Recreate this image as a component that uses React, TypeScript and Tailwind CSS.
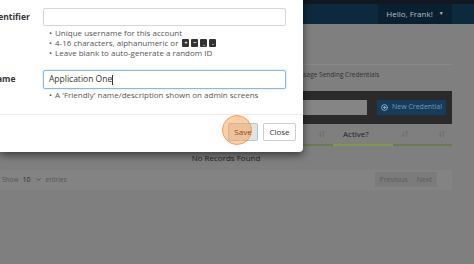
import { ArrowDownUp, ChevronDown, PlusCircle } from "lucide-react";

const font = { fontFamily: "'Open Sans', 'Liberation Sans', sans-serif" };

const keys = ["+", "−", "_", "."];

function SortIcon() {
  return <ArrowDownUp size={8} strokeWidth={2} className="text-[#6a6a6a]" />;
}

export default function App() {
  return (
    <div
      className="relative w-[474px] h-[264px] overflow-hidden bg-[#7f7f7f] text-[#2a2a2a]"
      style={font}
    >
      {/* Navbar */}
      <div className="h-[4px] bg-[#111821]" />
      <div className="h-[20px] bg-[#0d293d] flex justify-end pr-[22px]">
        <div className="w-[74px] bg-[#0a2031] flex items-center justify-center gap-[6px] text-[8px] text-[#b4bfc9]">
          <span>Hello, Frank!</span>
          <span className="text-[5px]">▼</span>
        </div>
      </div>

      {/* Page content (under overlay) */}
      <div className="pr-[22px]">
        <div className="mt-[40px] border-t border-[#898989]" />
        <div className="pl-[286px] pt-[5px] text-[6.5px] text-[#333]">
          » Message Sending Credentials
        </div>

        <div className="mt-[11px] h-[33px] bg-[#2a2a2a] flex items-center pl-[4px] pr-[6px]">
          <div className="flex-1 h-[15px] bg-[#858585]" />
          <div className="ml-[10px] w-[69px] h-[15px] bg-[#163c5c] flex items-center justify-center gap-[4px] text-[7px] text-[#7b97b1]">
            <PlusCircle size={7} strokeWidth={3} className="text-[#9fb3c6]" />
            <span>New Credential</span>
          </div>
        </div>

        <div className="h-[22px] flex items-center border-b-2 border-[#6b7a52] text-[8px] relative">
          <div className="w-[326px] flex justify-end">
            <SortIcon />
          </div>
          <div className="ml-[17px] w-[66px] flex items-center justify-between">
            <span className="text-[#222]">Active?</span>
            <SortIcon />
          </div>
          <div className="flex-1 flex justify-end pr-[6px]">
            <SortIcon />
          </div>
          <div className="absolute left-[333px] w-[60px] -bottom-[2px] h-[2px] bg-[#7d9a49]" />
        </div>

        <div className="h-[24px] flex items-center justify-center text-[8px] text-[#252525]">
          No Records Found
        </div>

        <div className="h-[20px] bg-[#838383] flex items-center justify-between pl-[2px] pr-[15px] text-[6.5px] text-[#575757]">
          <div className="flex items-center gap-[4px]">
            <span>Show</span>
            <span className="text-[7px] text-[#2e2e2e]">10</span>
            <ChevronDown size={7} strokeWidth={3} className="text-[#4a4a4a]" />
            <span>entries</span>
          </div>
          <div className="h-[15px] bg-[#7b7b7b] flex items-center gap-[9px] px-[5px] text-[7px] text-[#5a5a5a]">
            <span>Previous</span>
            <span>Next</span>
          </div>
        </div>
      </div>

      {/* Modal */}
      <div className="absolute left-0 -top-[20px] w-[303px] h-[172px] bg-white rounded-br-[4px] shadow-[0_3px_8px_rgba(0,0,0,0.55)]">
        <div className="pt-[28px] pl-[43px] pr-[17px] relative">
          <div className="absolute -left-[10px] top-[31px] text-[8.5px] font-bold text-[#333]">Identifier</div>
          <div className="h-[18px] border border-[#d6d6d6] rounded-[2px]" />
          <ul className="mt-[2px] pl-[6px] text-[8px] leading-[10px] text-[#555]">
            <li className="flex items-center gap-[3px]">
              <span>•</span>
              <span>Unique username for this account</span>
            </li>
            <li className="flex items-center gap-[3px]">
              <span>•</span>
              <span>4-16 characters, alphanumeric or</span>
              <span className="flex gap-[2px] ml-[1px]">
                {keys.map((k) => (
                  <span
                    key={k}
                    className="w-[7px] h-[8px] rounded-[1px] bg-[#333] text-white text-[6px] leading-[8px] font-bold flex items-center justify-center"
                  >
                    {k}
                  </span>
                ))}
              </span>
            </li>
            <li className="flex items-center gap-[3px]">
              <span>•</span>
              <span>Leave blank to auto-generate a random ID</span>
            </li>
          </ul>
        </div>

        <div className="pt-[12px] pl-[43px] pr-[17px] relative">
          <div className="absolute -left-[10px] top-[15px] text-[8.5px] font-bold text-[#333]">Name</div>
          <div className="h-[19px] border border-[#8ab8e0] rounded-[2px] shadow-[0_0_2px_rgba(102,175,233,0.6)] flex items-center pl-[5px] text-[8.5px] text-[#333]">
            Application One<span className="w-px h-[10px] bg-[#333]" />
          </div>
          <ul className="mt-[1px] pl-[6px] text-[8px] leading-[10px] text-[#555]">
            <li className="flex items-center gap-[3px]">
              <span>•</span>
              <span>A 'Friendly' name/description shown on admin screens</span>
            </li>
          </ul>
        </div>

        <div className="mt-[14px] border-t border-[#ececec] flex justify-end gap-[5px] pt-[8px] pr-[7px]">
          <button className="relative w-[30px] h-[18px] rounded-[2px] bg-[#e3e3e3] border border-[#a9c8e0] text-[8px] text-[#8a4a1f]">
            <span className="absolute left-[-7px] top-[-9px] w-[30px] h-[30px] rounded-full bg-[#f6a860]/55 border border-[#f0a05a]" />
            <span className="relative">Save</span>
          </button>
          <button className="w-[33px] h-[18px] rounded-[2px] bg-white border border-[#ccc] text-[8px] text-[#333]">
            Close
          </button>
        </div>
      </div>
    </div>
  );
}
